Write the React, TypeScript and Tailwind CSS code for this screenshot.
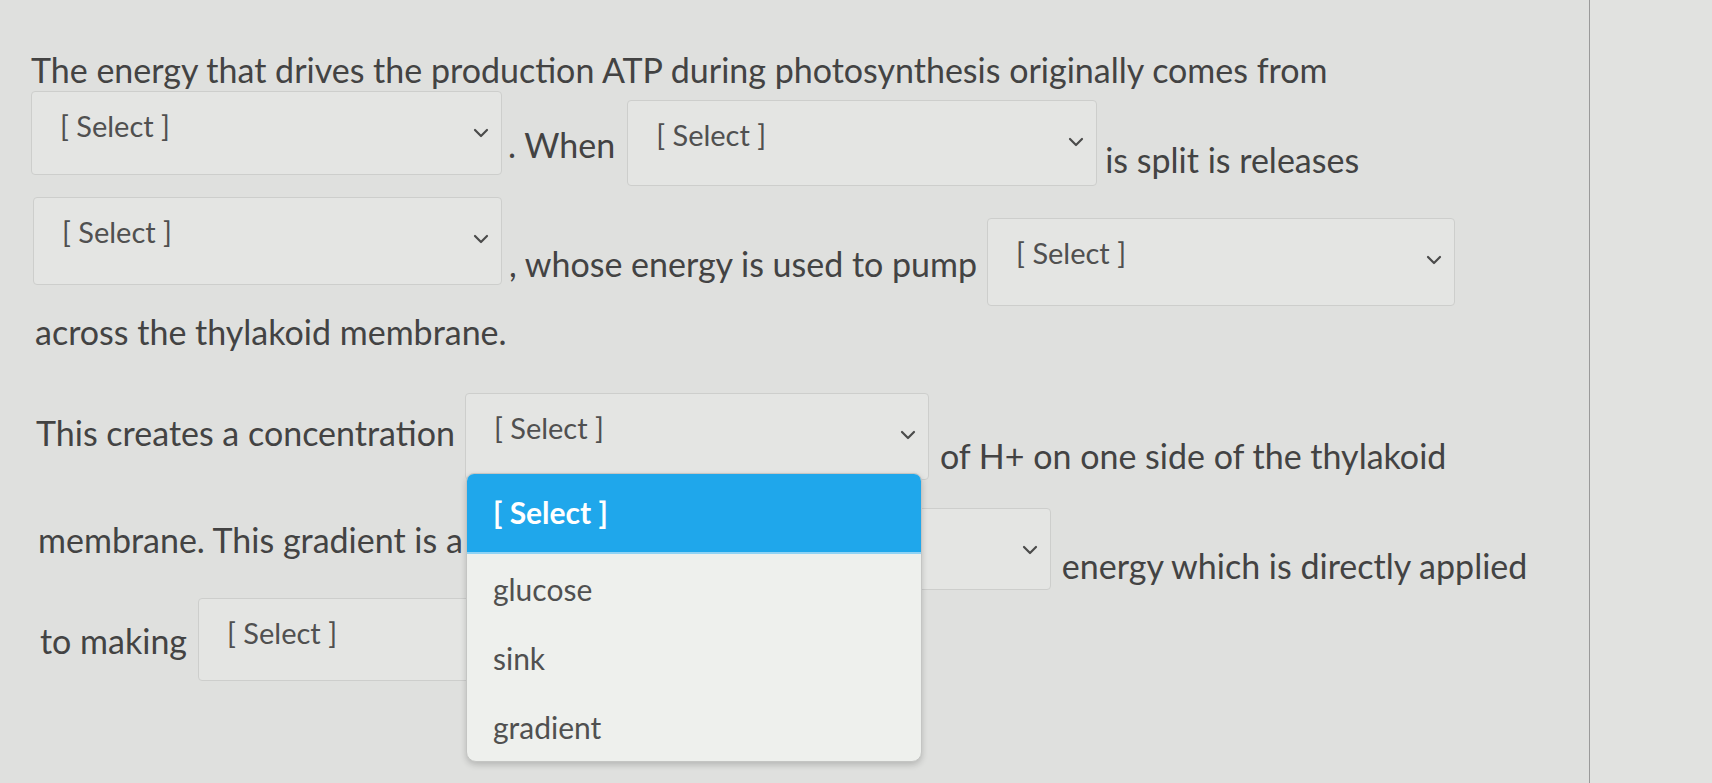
import React from 'react';

const Chevron = () => (
  <svg width="16" height="10" viewBox="0 0 16 10" className="shrink-0">
    <polyline points="2,2 8,8 14,2" fill="none" stroke="#4b4b4b" strokeWidth="2.2" strokeLinecap="round" strokeLinejoin="round" />
  </svg>
);

const Select = ({ className = '' }: { className?: string }) => (
  <div className={`flex shrink-0 items-start justify-between rounded-[4px] border border-[#cdcecc] bg-[#e4e5e3] pl-[28px] pr-[12px] ${className}`}>
    <span className="mt-[14px] text-[29px] text-[#505050]">[ Select ]</span>
    <span className="mt-[36px]">
      <Chevron />
    </span>
  </div>
);

const options = ['glucose', 'sink', 'gradient'];

export default function App() {
  return (
    <div className="flex h-[783px] w-[1712px] overflow-hidden bg-[#dfe0de] font-['Lato',sans-serif] text-[34px] leading-[40px] text-[#434343]">
      <div className="w-[1590px] shrink-0 border-r border-[#9a9a9a] pl-[31px] pt-[50px]">
        <p className="whitespace-nowrap">The energy that drives the production ATP during photosynthesis originally comes from</p>

        <div className="mt-[1px] flex items-start whitespace-nowrap">
          <Select className="h-[84px] w-[471px]" />
          <span className="ml-[6px] mt-[34px]">. When</span>
          <Select className="ml-[12px] mt-[9px] h-[86px] w-[470px]" />
          <span className="ml-[8px] mt-[49px]">is split is releases</span>
        </div>

        <div className="mt-[11px] flex items-start whitespace-nowrap">
          <Select className="ml-[2px] h-[88px] w-[469px]" />
          <span className="ml-[7px] mt-[47px]">, whose energy is used to pump</span>
          <Select className="ml-[10px] mt-[21px] h-[88px] w-[468px]" />
        </div>

        <p className="ml-[4px] mt-[6px] whitespace-nowrap">across the thylakoid membrane.</p>

        <div className="mt-[41px] flex items-start whitespace-nowrap">
          <span className="ml-[5px] mt-[20px]">This creates a concentration</span>
          <div className="relative ml-[10px]">
            <Select className="h-[87px] w-[464px]" />
            <div className="absolute left-[1px] top-[80px] z-10 w-[456px] overflow-hidden rounded-b-[10px] rounded-t-[8px] border border-[#c4c5c3] bg-[#eef0ed] text-[30px] shadow-[0_3px_6px_rgba(0,0,0,0.18)]">
              <div className="flex h-[80px] items-start border-b-2 border-[#8fd3f5] bg-[#1fa7eb] pl-[26px] pt-[18px] font-bold text-white">
                [ Select ]
              </div>
              {options.map((o) => (
                <div key={o} className="flex h-[69px] items-center pl-[26px] text-[#505050]">
                  {o}
                </div>
              ))}
            </div>
          </div>
          <span className="ml-[11px] mt-[43px]">of H+ on one side of the thylakoid</span>
        </div>

        <div className="mt-[28px] flex items-start whitespace-nowrap">
          <span className="ml-[7px] mt-[12px]">membrane. This gradient is a</span>
          <Select className="ml-[10px] h-[82px] w-[578px]" />
          <span className="ml-[11px] mt-[38px]">energy which is directly applied</span>
        </div>

        <div className="mt-[8px] flex items-start whitespace-nowrap">
          <span className="ml-[9px] mt-[23px]">to making</span>
          <Select className="ml-[11px] h-[83px] w-[470px]" />
        </div>
      </div>
      <div className="flex-1 bg-[#e1e2e0]" />
    </div>
  );
}
